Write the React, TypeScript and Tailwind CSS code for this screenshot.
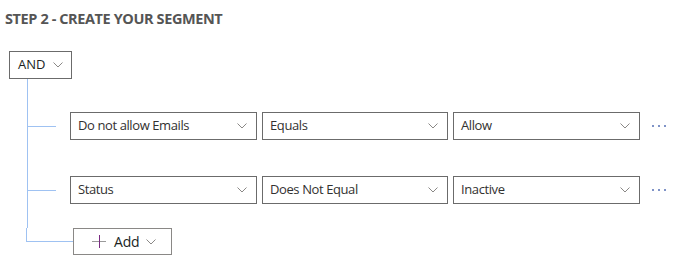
import React from "react";

const font = { fontFamily: '"Open Sans", "Noto Sans", sans-serif' };

function Chevron({ className = "" }: { className?: string }) {
  return (
    <svg width="10" height="6" viewBox="0 0 10 6" className={className} fill="none">
      <polyline points="0.5,0.5 5,5 9.5,0.5" stroke="#8a8886" strokeWidth="1" />
    </svg>
  );
}

function Dropdown({ value, width }: { value: string; width: string }) {
  return (
    <div className={`flex h-[28px] ${width} items-center justify-between border border-[#6b6b6b] bg-white pl-[7px] pr-[9px]`}>
      <span className="text-[13px] tracking-[-0.4px] text-[#323130]">{value}</span>
      <Chevron />
    </div>
  );
}

function Dots() {
  return (
    <div className="ml-[12px] flex items-center gap-[4px]">
      <span className="h-[2px] w-[2px] bg-[#7f93c7]" />
      <span className="h-[2px] w-[2px] bg-[#7f93c7]" />
      <span className="h-[2px] w-[2px] bg-[#7f93c7]" />
    </div>
  );
}

function ConditionRow({ field, op, value }: { field: string; op: string; value: string }) {
  return (
    <div className="flex h-[28px] items-center">
      <div className="h-px w-[28px] bg-[#9fc2f2]" />
      <div className="ml-[14px] flex items-center gap-[5px]">
        <Dropdown value={field} width="w-[187px]" />
        <Dropdown value={op} width="w-[186px]" />
        <Dropdown value={value} width="w-[187px]" />
      </div>
      <Dots />
    </div>
  );
}

export default function App() {
  return (
    <div className="h-[280px] w-[683px] bg-white" style={font}>
      <h2 className="pl-[5px] pt-[9px] text-[14.5px] font-bold leading-[20px] tracking-[-0.4px] text-[#555555]">
        STEP 2 - CREATE YOUR SEGMENT
      </h2>

      <div className="ml-[9px] mt-[22px] flex h-[28px] w-[63px] items-center justify-between border border-[#6b6b6b] pl-[8px] pr-[8px]">
        <span className="text-[13px] text-[#201f1e]">AND</span>
        <Chevron />
      </div>

      {/* condition tree */}
      <div className="ml-[27px]">
        <div className="flex flex-col gap-[36px] border-l border-[#9fc2f2] pb-[24px] pt-[33px]">
          <ConditionRow field="Do not allow Emails" op="Equals" value="Allow" />
          <ConditionRow field="Status" op="Does Not Equal" value="Inactive" />
        </div>
        <div className="flex items-start">
          <div className="-ml-px h-[14px] w-[47px] border-b border-l border-[#9fc2f2]" />
          <button className="flex h-[27px] w-[99px] items-center border border-[#8a8886] bg-white pl-[18px]">
            <span className="relative h-[13px] w-[14px]">
              <span className="absolute left-0 top-[6px] h-px w-[14px] bg-[#9a9a9a]" />
              <span className="absolute left-[7px] top-0 h-[13px] w-px bg-[#7a2b82]" />
            </span>
            <span className="ml-[8px] text-[14px] tracking-[-0.2px] text-[#201f1e]">Add</span>
            <Chevron className="ml-[7px]" />
          </button>
        </div>
      </div>
    </div>
  );
}
